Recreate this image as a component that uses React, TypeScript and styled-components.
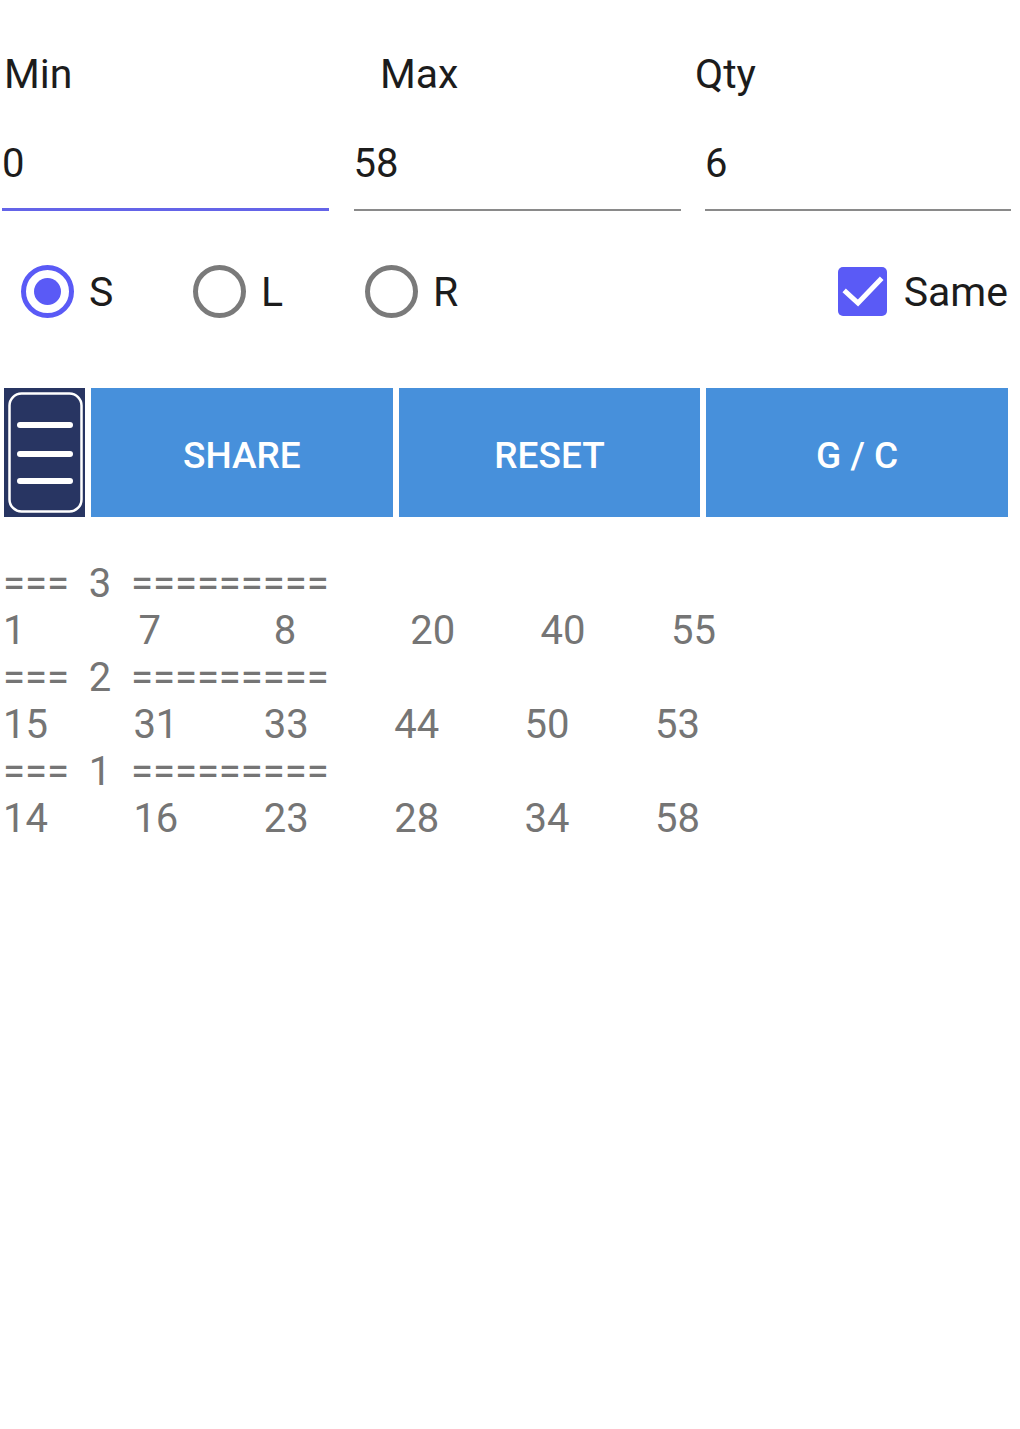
import { useState } from 'react'
import styled, { createGlobalStyle } from 'styled-components'

const GlobalStyle = createGlobalStyle`
  html, body {
    margin: 0;
    padding: 0;
    background: #ffffff;
    font-family: Roboto, "Noto Sans", sans-serif;
  }
`

type Group = { id: number; shifts: number[]; numbers: number[] }

const groups: Group[] = [
  { id: 3, numbers: [1, 7, 8, 20, 40, 55], shifts: [0, 5, 10, 16, 16, 16] },
  { id: 2, numbers: [15, 31, 33, 44, 50, 53], shifts: [0, 0, 0, 0, 0, 0] },
  { id: 1, numbers: [14, 16, 23, 28, 34, 58], shifts: [0, 0, 0, 0, 0, 0] },
]

const modes = ['S', 'L', 'R']

export default function App() {
  const [mode, setMode] = useState('S')
  const [same, setSame] = useState(true)
  const [min, setMin] = useState('0')
  const [max, setMax] = useState('58')
  const [qty, setQty] = useState('6')

  return (
    <Page>
      <GlobalStyle />
      <LabelRow>
        <Label>Min</Label>
        <Label>Max</Label>
        <Label>Qty</Label>
      </LabelRow>

      <FieldRow>
        <Field $active>
          <Input value={min} onChange={(e) => setMin(e.target.value)} />
        </Field>
        <Field>
          <Input value={max} onChange={(e) => setMax(e.target.value)} />
        </Field>
        <Field>
          <Input value={qty} onChange={(e) => setQty(e.target.value)} />
        </Field>
      </FieldRow>

      <OptionRow>
        <RadioGroup>
          {modes.map((m) => (
            <RadioOption key={m} onClick={() => setMode(m)}>
              <RadioCircle $checked={mode === m} />
              <OptionText>{m}</OptionText>
            </RadioOption>
          ))}
        </RadioGroup>
        <CheckOption onClick={() => setSame(!same)}>
          <CheckBox $checked={same}>
            {same && (
              <svg width="49" height="49" viewBox="0 0 49 49">
                <path d="M8 25 L20 36 L42 13" fill="none" stroke="#fff" strokeWidth="5" strokeLinecap="square" />
              </svg>
            )}
          </CheckBox>
          <OptionText>Same</OptionText>
        </CheckOption>
      </OptionRow>

      <ButtonRow>
        <MenuButton aria-label="Menu">
          <svg width="81" height="129" viewBox="0 0 81 129">
            <rect x="5.5" y="5.5" width="72" height="118" rx="12" fill="none" stroke="#fff" strokeWidth="2.5" />
            <line x1="16" y1="37" x2="66" y2="37" stroke="#fff" strokeWidth="6" strokeLinecap="round" />
            <line x1="16" y1="66" x2="66" y2="66" stroke="#fff" strokeWidth="6" strokeLinecap="round" />
            <line x1="16" y1="93" x2="66" y2="93" stroke="#fff" strokeWidth="6" strokeLinecap="round" />
          </svg>
        </MenuButton>
        <ActionButton>SHARE</ActionButton>
        <ActionButton>RESET</ActionButton>
        <ActionButton>G / C</ActionButton>
      </ButtonRow>

      <Results>
        {groups.map((g) => (
          <div key={g.id}>
            <GroupHeader>{`===  ${g.id}  =========`}</GroupHeader>
            <NumberRow>
              {g.numbers.map((n, i) => (
                <NumberCell key={i} $shift={g.shifts[i]}>
                  {n}
                </NumberCell>
              ))}
            </NumberRow>
          </div>
        ))}
      </Results>
    </Page>
  )
}

const Page = styled.div`
  width: 1020px;
  min-height: 1429px;
  box-sizing: border-box;
  padding-top: 50px;
  color: #1c1c1c;
`

const LabelRow = styled.div`
  display: grid;
  grid-template-columns: 376px 315px 1fr;
  padding-left: 4px;
`

const Label = styled.div`
  font-size: 41px;
  line-height: 48px;
  color: #1c1c1c;
`

const FieldRow = styled.div`
  display: grid;
  grid-template-columns: 327px 327px 306px;
  justify-content: space-between;
  margin-top: 42px;
  padding: 0 9px 0 2px;
`

const Field = styled.div<{ $active?: boolean }>`
  padding-bottom: ${(p) => (p.$active ? '20px' : '21px')};
  border-bottom: ${(p) => (p.$active ? '3px solid #6464e8' : '2px solid #8a8a8a')};
`

const Input = styled.input`
  display: block;
  width: 100%;
  box-sizing: border-box;
  margin: 0;
  padding: 0;
  border: none;
  outline: none;
  background: transparent;
  font-family: Roboto, sans-serif;
  font-size: 40px;
  line-height: 48px;
  height: 48px;
  color: #1c1c1c;
`

const OptionRow = styled.div`
  display: flex;
  align-items: center;
  justify-content: space-between;
  margin-top: 54px;
  padding: 0 12px 0 21px;
  height: 53px;
`

const RadioGroup = styled.div`
  display: flex;
  align-items: center;
`

const RadioOption = styled.div`
  display: flex;
  align-items: center;
  gap: 15px;
  width: 172px;
  cursor: pointer;
`

const RadioCircle = styled.span<{ $checked: boolean }>`
  position: relative;
  width: 53px;
  height: 53px;
  box-sizing: border-box;
  border-radius: 50%;
  border: 5px solid ${(p) => (p.$checked ? '#5a5af6' : '#7a7a7a')};
  flex-shrink: 0;

  &::after {
    content: '';
    display: ${(p) => (p.$checked ? 'block' : 'none')};
    position: absolute;
    left: 50%;
    top: 50%;
    width: 27px;
    height: 27px;
    margin: -13.5px 0 0 -13.5px;
    border-radius: 50%;
    background: #5a5af6;
  }
`

const OptionText = styled.span`
  font-size: 41px;
  line-height: 48px;
  color: #1c1c1c;
`

const CheckOption = styled.div`
  display: flex;
  align-items: center;
  gap: 17px;
  cursor: pointer;
`

const CheckBox = styled.span<{ $checked: boolean }>`
  display: block;
  width: 49px;
  height: 49px;
  box-sizing: border-box;
  border-radius: 5px;
  background: ${(p) => (p.$checked ? '#5a5af6' : 'transparent')};
  border: ${(p) => (p.$checked ? 'none' : '5px solid #7a7a7a')};

  svg {
    display: block;
  }
`

const ButtonRow = styled.div`
  display: flex;
  gap: 6px;
  margin-top: 70px;
  padding: 0 12px 0 4px;
  height: 129px;
`

const MenuButton = styled.button`
  flex: 0 0 81px;
  padding: 0;
  border: none;
  background: #283562;
  cursor: pointer;

  svg {
    display: block;
  }
`

const ActionButton = styled.button`
  flex: 1;
  padding: 5px 0 0;
  border: none;
  background: #4790db;
  color: #ffffff;
  font-family: Roboto, sans-serif;
  font-weight: 500;
  font-size: 37px;
  cursor: pointer;
`

const Results = styled.div`
  margin-top: 43px;
  padding-left: 3px;
  color: #757575;
  font-size: 40px;
  line-height: 47px;
`

const GroupHeader = styled.div`
  white-space: pre;
`

const NumberRow = styled.div`
  display: grid;
  grid-template-columns: repeat(6, 130.4px);
`

const NumberCell = styled.span<{ $shift: number }>`
  padding-left: ${(p) => p.$shift}px;
`
